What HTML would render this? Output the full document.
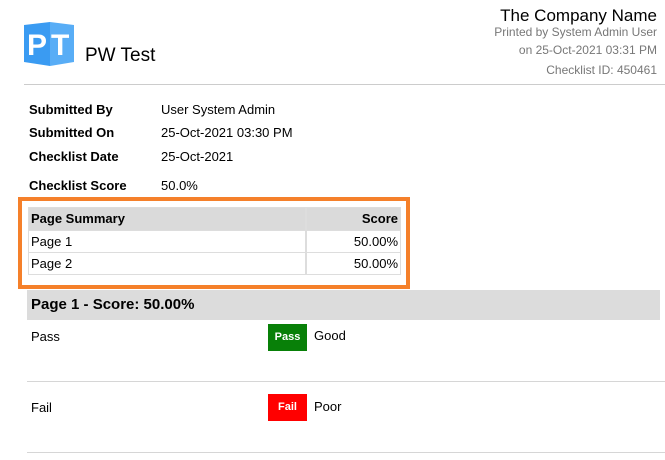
<!DOCTYPE html>
<html><head><meta charset="utf-8"><style>
body{margin:0;width:665px;height:460px;background:#fff;font-family:"Liberation Sans",sans-serif;position:relative;overflow:hidden;color:#000}
.a{position:absolute;white-space:nowrap}
.lbl{font-weight:bold;font-size:13px}
.val{font-size:13px}
.r{text-align:right}
</style></head><body>
<svg class="a" style="left:24px;top:22px" width="52" height="44" viewBox="0 0 52 44">
<path d="M0 3 L26 0 L26 44 L0 40 Z" fill="#3a9bf2"/>
<path d="M26 0 L50 3 L50 40 L26 44 Z" fill="#58adf6"/>
<text x="3" y="33" font-family="Liberation Sans" font-weight="bold" font-size="30" fill="#fff">P</text>
<text x="27" y="33" font-family="Liberation Sans" font-weight="bold" font-size="30" fill="#fff">T</text>
</svg>
<div class="a" style="left:85px;top:45px;font-size:19px">PW Test</div>
<div class="a r" style="right:8px;top:6px;font-size:17px">The Company Name</div>
<div class="a r" style="right:8px;top:25px;font-size:12px;color:#777">Printed by System Admin User</div>
<div class="a r" style="right:8px;top:43px;font-size:12px;color:#777">on 25-Oct-2021 03:31 PM</div>
<div class="a r" style="right:8px;top:63px;font-size:12px;color:#777">Checklist ID: 450461</div>
<div class="a" style="left:24px;top:84px;width:641px;height:1px;background:#ccc"></div>
<div class="a lbl" style="left:29px;top:102px">Submitted By</div><div class="a val" style="left:161px;top:102px">User System Admin</div>
<div class="a lbl" style="left:29px;top:125px">Submitted On</div><div class="a val" style="left:161px;top:125px">25-Oct-2021 03:30 PM</div>
<div class="a lbl" style="left:29px;top:149px">Checklist Date</div><div class="a val" style="left:161px;top:149px">25-Oct-2021</div>
<div class="a lbl" style="left:29px;top:178px">Checklist Score</div><div class="a val" style="left:161px;top:178px">50.0%</div>
<div class="a" style="left:18px;top:197px;width:384px;height:84px;border:4px solid #f5802a"></div>
<div class="a" style="left:28px;top:207px;width:373px;height:68px;background:#ddd"></div>
<div class="a" style="left:29px;top:208px;width:276px;height:22px;background:#dadada"></div>
<div class="a" style="left:307px;top:208px;width:93px;height:22px;background:#dadada"></div>
<div class="a" style="left:29px;top:231px;width:276px;height:21px;background:#fff"></div>
<div class="a" style="left:307px;top:231px;width:93px;height:21px;background:#fff"></div>
<div class="a" style="left:29px;top:253px;width:276px;height:21px;background:#fff"></div>
<div class="a" style="left:307px;top:253px;width:93px;height:21px;background:#fff"></div>
<div class="a lbl" style="left:31px;top:211px">Page Summary</div><div class="a lbl r" style="right:267px;top:211px">Score</div>
<div class="a val" style="left:31px;top:234px">Page 1</div><div class="a val r" style="right:267px;top:234px">50.00%</div>
<div class="a val" style="left:31px;top:256px">Page 2</div><div class="a val r" style="right:267px;top:256px">50.00%</div>
<div class="a" style="left:27px;top:290px;width:633px;height:30px;background:#dcdcdc"></div>
<div class="a" style="left:31px;top:296px;font-size:15px;font-weight:bold">Page 1 - Score: 50.00%</div>
<div class="a val" style="left:31px;top:329px">Pass</div>
<div class="a" style="left:268px;top:324px;width:39px;height:27px;background:#088008;color:#fff;font-size:11px;font-weight:bold;text-align:center;line-height:27px">Pass</div>
<div class="a val" style="left:314px;top:328px">Good</div>
<div class="a" style="left:27px;top:381px;width:638px;height:1px;background:#d6d6d6"></div>
<div class="a val" style="left:31px;top:400px">Fail</div>
<div class="a" style="left:268px;top:394px;width:39px;height:27px;background:#f00;color:#fff;font-size:11px;font-weight:bold;text-align:center;line-height:27px">Fail</div>
<div class="a val" style="left:314px;top:399px">Poor</div>
<div class="a" style="left:27px;top:452px;width:638px;height:1px;background:#d6d6d6"></div>
</body></html>
